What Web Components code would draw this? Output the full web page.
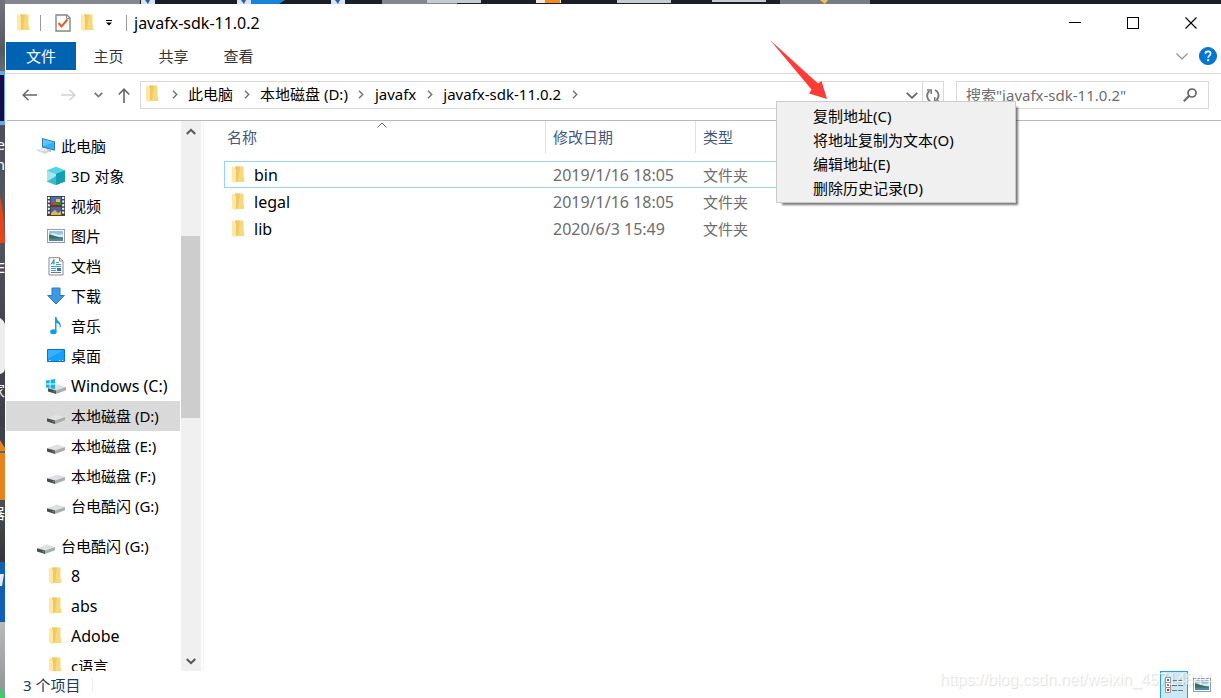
<!DOCTYPE html>
<html lang="zh-CN">
<head>
<meta charset="utf-8">
<title>javafx-sdk-11.0.2</title>
<style>
  html, body { margin: 0; height: 100%; overflow: hidden; }
  body {
    font: 15px/20px "Noto Sans", "Noto Sans CJK SC", sans-serif;
    color: #000;
    --latin: 16px;
  }
</style>
</head>
<body>
<desktop-shell>
  <explorer-window></explorer-window>
  <context-menu slot="overlay"></context-menu>
  <pointer-arrow slot="overlay"></pointer-arrow>
  <water-mark slot="overlay">https://blog.csdn.net/weixin_45714844</water-mark>
</desktop-shell>

<script>
const define = (name, html, setup) => {
  const t = document.createElement('template');
  t.innerHTML = html;
  customElements.define(name, class extends HTMLElement {
    connectedCallback() {
      if (this.shadowRoot) return;
      const root = this.attachShadow({ mode: 'open' });
      root.append(t.content.cloneNode(true));
      if (setup) setup(this, root);
    }
  });
};

const svg = (w, h, body) => `<svg width="${w}" height="${h}" viewBox="0 0 ${w} ${h}" aria-hidden="true">${body}</svg>`;
const line = (d, c, w = 1) => `<path d="${d}" fill="none" stroke="${c}" stroke-width="${w}"/>`;
const drive = `<path d="M0 11.2 10 7.6 18 10 8 14.2Z" fill="#dfe0e2"/><path d="M0 11.2 8 13.6V17L0 14.4Z" fill="#4a4d4f"/><path d="M8 13.6 18 10v3.2L8 17Z" fill="#aaadb0"/><path d="M5.5 13.8l1.7.5v1.3l-1.7-.5Z" fill="#28c840"/>`;
const photo = `<rect x=".5" y=".5" width="17" height="13" fill="#fff" stroke="#9b9b9b"/><path d="M2 2h14v10H2Z" fill="#8fc4f2"/><path d="M2 5.5Q6 3.5 9 5t7 0v3H2Z" fill="#d9ecfa"/><path d="M2 5.5C5 5 7 8 16 8.4V10H2Z" fill="#3c7053"/><path d="M2 9.5h14V12H2Z" fill="#4c86b4"/>`;
const ICONS = {
  folder: svg(14, 18, `<path d="M3 .5h8.500v10.500l.7 1v4H3Z" fill="#f7d87c"/><path d="M3 .5h5L6 15.500H3Z" fill="#eec968"/><path d="M0 .5h1.500l2.500 3V17.500L0 15.500Z" fill="#ffe8a3"/>`),
  check: svg(16, 18, `<path d="M1 1h11l3 3v13H1Z" fill="#fff" stroke="#858585" stroke-width="1.4"/><path d="M11.5 1v3.5H15" fill="none" stroke="#858585"/>${line('M3.5 9l3 3.5 6-7', '#ee5a24', 2)}`),
  more: svg(8, 6, `<path d="M1 .5h6" stroke="#000"/><path d="M1 2.5h6L4 5.5Z"/>`),
  min: svg(12, 12, line('M0 5.5h12', '#000')),
  max: svg(12, 12, '<rect x=".5" y=".5" width="11" height="11" fill="none" stroke="#000"/>'),
  close: svg(12, 12, line('M.5.5l11 11M11.5.5l-11 11', '#000', 1.1)),
  expand: svg(12, 7, line('M.5.5 6 6 11.5.5', '#8f8f8f', 1.2)),
  help: svg(18, 18, `<circle cx="9" cy="9" r="8.6" fill="#0078d7" stroke="#0b5fa5" stroke-width=".8"/><path d="M6.4 6.8Q6.5 4.4 9.1 4.4q2.5 0 2.5 2.2 0 1.2-1.2 2Q9.2 9.4 9.2 10.8" fill="none" stroke="#fff" stroke-width="1.7"/><path d="M8.2 12.2h2v2h-2Z" fill="#fff"/>`),
  back: svg(15, 12, line('M15 6H1.5M6.5.8 1.2 6l5.3 5.2', '#666', 1.5)),
  forward: svg(15, 12, line('M0 6h13.5M8.5.8 13.8 6 8.5 11.2', '#d2d2d2', 1.5)),
  recent: svg(9, 6, line('M.7.8l3.8 3.8L8.3.8', '#777', 1.7)),
  up: svg(12, 15, line('M6 15V1.5M.8 6.5 6 1.2l5.2 5.3', '#666', 1.6)),
  crumb: svg(6, 9, line('M1 .8 4.7 4.5 1 8.2', '#777', 1.5)),
  drop: svg(12, 7, line('M.8.8 6 5.8 11.2.8', '#666', 1.8)),
  refresh: svg(16, 15, `${line('M5.2 13A6 6 0 0 1 4.500 3M10 2A6 6 0 0 1 11.500 12', '#777', 1.8)}<path d="M2 1.200H7V6H5.500V2.800H2Z" fill="#777"/><path d="M14 13.800H9V9h1.500v3.200H14Z" fill="#777"/>`),
  search: svg(14, 14, `<circle cx="9" cy="5" r="4" fill="none" stroke="#666" stroke-width="1.7"/>${line('M6.2 7.8.8 13.2', '#666', 2)}`),
  sort: svg(10, 6, line('M.5 5.5 5 1l4.5 4.5', '#666')),
  scrollup: svg(10, 7, line('M.8 6 5 1.8 9.2 6', '#555', 2)),
  scrolldown: svg(10, 7, line('M.8 1 5 5.2 9.2 1', '#555', 2)),
  pc: svg(20, 18, `<path d="M6 1l13 3.4v9.4L6 10.6Z" fill="#2c7cb0"/><path d="M7 2.3l11 2.9v7.2L7 9.6Z" fill="#35b1fa"/><path d="M7 2.3l11 2.9L7 9Z" fill="#61c5ff"/><path d="M11 12l4 1v2l-4-1Z" fill="#b6bdc3"/><path d="M0 13.2l5.5-2L14 14l-5 3Z" fill="#cfd5da"/><path d="M2 13.2l4-1.2 5 2M4 14.2l4-1.4" fill="none" stroke="#eef1f3"/>`),
  cube: svg(18, 18, `<path d="M9 0l9 3.5v11L9 18 0 14.5v-11Z" fill="#18a9bc"/><path d="M9 0l9 3.5L9 7 0 3.5Z" fill="#53d6e4"/><path d="M0 3.5 9 7v11l-9-3.5Z" fill="#a4e7ef"/><path d="M0 14.5 9 9v9Z" fill="#35bdce"/><path d="M9 7l9-3.5v11L9 18Z" fill="#169db1"/>`),
  film: svg(18, 20, `<path d="M0 0h18v20H0Z" fill="#444"/><path d="M4 1h10v8H4Z" fill="#3b6fd0"/><path d="M4 11h10v8H4Z" fill="#3565c8"/><path d="M1.8 1v18M16.2 1v18" stroke="#fff" stroke-width="2" stroke-dasharray="2 1.6"/><path d="M9 3h4v3H9Z" fill="#e9c22f"/><path d="M4 6h4v3H4Zm5 5h4v2H9Z" fill="#d33a2c"/><path d="M8 6h6v3H8Z" fill="#3b8a35"/><path d="M4 17l4-3 3 3 3-2v4H4Z" fill="#e0bc35"/>`),
  photo: svg(18, 14, photo),
  doc: svg(16, 19, `<path d="M1 .7h10.5L15 4v14H1Z" fill="#fff" stroke="#8b8b8b"/><path d="M11.5.7V4H15" fill="none" stroke="#8b8b8b"/>${line('M8 5.500h3M8 7.500h5M3 9.500h10M3 11.500h5M3 13.500h5', '#3b9fdd')}${line('M3 15.500h10', '#777')}${line('M3 7.5l3-5v5M4.200 6h2', '#1986cc')}<path d="M9 11h4v3H9Z" fill="#357c94"/>`),
  download: svg(18, 18, `<path d="M5 1h8v7.5h4.3L9 17 .7 8.500H5Z" fill="#3c99e6" stroke="#2678bf"/>`),
  music: svg(14, 18, `<path d="M6 0h1.500c0 4 4.800 4.500 4.300 9.500l-1.300 2C11.500 8 9.800 6.500 7.500 6v8.500H6Z" fill="#129cef"/><ellipse cx="4.400" cy="14.700" rx="3.300" ry="2.500" fill="#129cef"/>`),
  desk: svg(18, 14, `<path d="M.5.5h17v12H.5Z" fill="#14a0fb" stroke="#0874b9"/><path d="M1 1h16L1 10Z" fill="#35b0ff"/><path d="M2 11.500h1.500M12 11.500h1M15 11.500h1" stroke="#fff"/>`),
  drive: svg(18, 18, drive),
  windrive: svg(20, 18, `<g transform="translate(2)">${drive}</g><path d="M0 3.500l3.600-.6V6.500H0ZM4.500 2.800 9 2v4.500H4.500ZM0 7.400h3.600V11L0 10.400ZM4.500 7.400H9V12l-4.500-.8Z" fill="#0cb6f2"/>`),
  details: svg(18, 18, `<g fill="#fff" stroke="#999"><path d="M.5 1.500h5v5h-5ZM.5 6.500h5v5h-5ZM.5 11.500h5v5h-5Z"/></g><path d="M2 3h2v2H2Z" fill="#2d7dca"/><path d="M2 8h2v2H2Z" fill="#b06e2a"/><path d="M2 13h2v2H2Z" fill="#d21c1c"/>${line('M7 4.500h5M13 4.500h5M7 9.500h5M13 9.500h5M7 14.500h5M13 14.500h5', '#777')}`)
};

define('ui-icon', `<style>:host{display:inline-flex;flex:none}svg{display:block}</style>`,
  (el, root) => root.append(document.createRange().createContextualFragment(ICONS[el.getAttribute('name')])));

/* Desktop wallpaper with the slivers of shortcuts that peek out beside the window */
define('desktop-shell', `<style>
  :host{display:block;position:relative;box-sizing:border-box;height:100vh;padding:4px 0 0 5px;overflow:hidden;
    background:linear-gradient(90deg,#0000 5px,#1b1e27 5px) 0 0/100% 4px no-repeat,
    linear-gradient(#73757c,#555962 50px,#666a72 70px,#4c505a 130px,#555862 225px,#45484f 310px,#3d4047 420px,#4c4f55 500px,#34363b 560px,#b9bbbd 620px,#8f9396)}
  .wall{position:absolute;inset:0;overflow:hidden}
  .wall svg{position:absolute;left:0;top:0}
  .wall span{position:absolute;left:-4px;width:9px;overflow:hidden;color:#fff;white-space:nowrap;direction:rtl}
  ::slotted(explorer-window){position:relative}
</style>
<div class="wall">
  <svg width="1221" height="698" aria-hidden="true">
    <path d="M0 71h5v54H0Z" fill="#6aa7e6"/><path d="M0 75h4v46H0Z" fill="#160c4b"/>
    <path d="M0 197q4 14 5 46H0Z" fill="#e5451a"/><path d="M0 318q5 3 5 8v42q0 5-5 6Z" fill="#eee"/>
    <path d="M0 440l5 8v52H0Z" fill="#e58320"/><path d="M0 452h5" stroke="#666" stroke-width="2"/>
    <path d="M0 562h5v60H0Z" fill="#1260b4"/><path d="M0 574l4 0-2 12H0Z" fill="#e4eaff"/>
    <path d="M0 688q5 3 5 10H0Z" fill="#43c66c"/>
    <path d="M5 0h135v4H5ZM382 0h75v4h-75Z" fill="#858790"/>
    <path d="M141 0h14v4h-14ZM237 0h14v4h-14ZM331 0h14v4h-14Z" fill="#d6e4f5"/>
    <path d="M145 0h5l-2 4ZM241 0h5l-2 4ZM335 0h5l-2 4Z" fill="#2860a8"/>
    <path d="M251 0h34l-6 4h-28Z" fill="#1485d8"/>
    <path d="M427 0h54v3h-54ZM617 0h54v3h-54ZM712 0h54v2h-54Z" fill="#c6ccd0"/>
    <path d="M536 0h25v3h-25Z" fill="#f3e8da"/><path d="M545 0h15v3h-15Z" fill="#f58a18"/>
    <path d="M780 0h90v4h-90Z" fill="#777b86"/><path d="M820 0h8l-3 4Z" fill="#f0c34a"/>
  </svg>
  <span style="top:134px">e</span><span style="top:154px">n</span><span style="top:257px">E</span>
  <span style="top:380px">家</span><span style="top:503px">器</span>
</div>
<slot></slot><slot name="overlay"></slot>`);

define('explorer-window', `<style>
  :host{display:flex;flex-direction:column;height:100%;background:#fff;overflow:hidden}
  main{flex:1;display:flex;min-height:0;margin-left:2px;border-top:1px solid #b9b9b9}
  nav-pane{margin-left:-1px} file-list{flex:1;min-width:0}
</style>
<title-bar>javafx-sdk-11.0.2</title-bar>
<ribbon-tabs></ribbon-tabs>
<address-row></address-row>
<main><nav-pane></nav-pane><scroll-track></scroll-track><file-list></file-list></main>
<status-bar></status-bar>`);

const BTN = `button{all:unset;box-sizing:border-box;display:flex;align-items:center;justify-content:center;flex:none}`;

define('title-bar', `<style>${BTN}
  :host{display:flex;align-items:center;height:38px;padding-left:12px;font-size:var(--latin)}
  i{width:1px;height:16px;background:#999} .a{margin:0 14px 0 9px}
  .b{margin:0 7px 0 13px} .f{margin:0 10px} .t{flex:1}
  .w button{width:58px;height:38px} .w{display:flex;padding-right:1px}
</style>
<ui-icon name="folder"></ui-icon><i class="a"></i>
<button aria-label="属性"><ui-icon name="check"></ui-icon></button>
<button class="f" aria-label="新建文件夹"><ui-icon name="folder"></ui-icon></button>
<button aria-label="自定义快速访问工具栏"><ui-icon name="more"></ui-icon></button><i class="b"></i>
<span class="t"><slot></slot></span>
<div class="w"><button aria-label="最小化"><ui-icon name="min"></ui-icon></button><button aria-label="最大化"><ui-icon name="max"></ui-icon></button><button aria-label="关闭"><ui-icon name="close"></ui-icon></button></div>`);

define('ribbon-tabs', `<style>${BTN}
  :host{display:flex;align-items:center;padding:0 4px 3px 1px;border-bottom:1px solid #dadada;color:#333}
  button{height:28px} .tab{width:65px} .file{width:70px;background:#0063b1;color:#fff}
  .gap{flex:1} .help{margin-left:11px}
</style>
<button class="tab file">文件</button><button class="tab">主页</button><button class="tab">共享</button><button class="tab">查看</button>
<span class="gap"></span>
<button aria-label="展开功能区"><ui-icon name="expand"></ui-icon></button><button class="help" aria-label="帮助"><ui-icon name="help"></ui-icon></button>`);

define('address-row', `<style>${BTN}
  :host{display:flex;padding:7px 12px 11px 17px}
  .nav{display:flex;align-items:center;width:118px} .nav button+button{margin-left:24px}
  .nav .r{margin-left:18px!important} .nav .u{margin-left:15px!important}
  .field{flex:1;min-width:0;display:flex;box-sizing:border-box;height:28px;border:1px solid #d9d9d9}
  ol{flex:1;display:flex;align-items:center;margin:0;padding:0 0 0 5px;list-style:none;white-space:nowrap}
  li{display:flex;align-items:center;height:24px} ol{align-items:flex-start} a{color:#000;text-decoration:none}
  .sep{width:27px;justify-content:center} .first{margin-left:1px}
  .drop{width:20px} .ref{width:21px;border-left:1px solid #d9d9d9}
  .search{box-sizing:border-box;display:flex;align-items:center;width:253px;height:28px;margin-left:12px;border:1px solid #d9d9d9;padding:0 11px 0 9px}
  input{all:unset;flex:1;min-width:0;height:26px} input::placeholder{color:#6d6d6d;opacity:1}
</style>
<div class="nav"><button aria-label="后退"><ui-icon name="back"></ui-icon></button><button aria-label="前进"><ui-icon name="forward"></ui-icon></button><button class="r" aria-label="最近浏览的位置"><ui-icon name="recent"></ui-icon></button><button class="u" aria-label="上移"><ui-icon name="up"></ui-icon></button></div>
<div class="field"><ol>
<li><ui-icon name="folder"></ui-icon></li><li class="sep first"><ui-icon name="crumb"></ui-icon></li>
<li><a href="#pc">此电脑</a></li><li class="sep"><ui-icon name="crumb"></ui-icon></li>
<li><a href="#d">本地磁盘 (D:)</a></li><li class="sep"><ui-icon name="crumb"></ui-icon></li>
<li><a href="#javafx">javafx</a></li><li class="sep"><ui-icon name="crumb"></ui-icon></li>
<li><a href="#sdk">javafx-sdk-11.0.2</a></li><li class="sep"><ui-icon name="crumb"></ui-icon></li>
</ol><button class="drop" aria-label="以前的位置"><ui-icon name="drop"></ui-icon></button><button class="ref" aria-label="刷新"><ui-icon name="refresh"></ui-icon></button></div>
<div class="search"><input type="text" aria-label="搜索" placeholder='搜索"javafx-sdk-11.0.2"'><ui-icon name="search"></ui-icon></div>`);

define('nav-item', `<style>
  :host{display:block} a{display:flex;align-items:center;height:30px;padding-left:40px;color:#000;text-decoration:none;white-space:nowrap}
  :host([root]) a{padding-left:30px} :host([selected]) a{background:#d9d9d9}
  :host([latin]) a{font-size:var(--latin)}
  .i{display:flex;justify-content:center;width:20px;margin-right:5px}
</style><a href="#"><span class="i"></span><slot></slot></a>`, (el, root) => {
  root.querySelector('.i').innerHTML = `<ui-icon name="${el.getAttribute('icon')}"></ui-icon>`;
});

define('nav-pane', `<style>
  :host{display:block;box-sizing:border-box;width:174px;padding-top:10px;overflow:hidden} section+section{margin-top:10px}
</style>
<section>
<nav-item root icon="pc">此电脑</nav-item>
<nav-item icon="cube">3D 对象</nav-item>
<nav-item icon="film">视频</nav-item>
<nav-item icon="photo">图片</nav-item>
<nav-item icon="doc">文档</nav-item>
<nav-item icon="download">下载</nav-item>
<nav-item icon="music">音乐</nav-item>
<nav-item icon="desk">桌面</nav-item>
<nav-item latin icon="windrive">Windows (C:)</nav-item>
<nav-item icon="drive" selected>本地磁盘 (D:)</nav-item>
<nav-item icon="drive">本地磁盘 (E:)</nav-item>
<nav-item icon="drive">本地磁盘 (F:)</nav-item>
<nav-item icon="drive">台电酷闪 (G:)</nav-item>
</section>
<section>
<nav-item root icon="drive">台电酷闪 (G:)</nav-item>
<nav-item latin icon="folder">8</nav-item>
<nav-item latin icon="folder">abs</nav-item>
<nav-item latin icon="folder">Adobe</nav-item>
<nav-item icon="folder">c语言</nav-item>
</section>`);

define('scroll-track', `<style>${BTN}
  :host{display:flex;flex-direction:column;width:20px;margin:0 2px 0 1px;background:#f0f0f0}
  button{height:20px} .pre{flex:95} .thumb{flex:182;margin-right:1px;background:#cdcdcd} .post{flex:233}
</style>
<button aria-label="向上滚动"><ui-icon name="scrollup"></ui-icon></button><div class="pre"></div><div class="thumb"></div><div class="post"></div><button aria-label="向下滚动"><ui-icon name="scrolldown"></ui-icon></button>`);

define('file-list', `<style>
  :host{display:block;border-left:1px solid #f3f3f3;padding-left:20px}
  table{width:690px;table-layout:fixed;border-collapse:separate;border-spacing:0}
  .n{width:322px} .d{width:150px}
  th{position:relative;padding:0 0 8px;font-weight:400;text-align:left;color:#44587a}
  th div{height:32px;line-height:32px;padding-left:7px;border-right:1px solid #e0e0e0} th.n div{padding-left:3px} th:last-child div{border:0}
  th ui-icon{position:absolute;left:153px;top:1px}
  td{height:27px;padding:0 0 0 7px;color:#6d6d6d;white-space:nowrap}
  td:first-child{padding-left:8px;color:#000;font-size:var(--latin)} td:nth-child(2){font-size:var(--latin)}
  td span{display:flex;align-items:center;gap:8px}
  tr.focus{outline:1px solid #99d1ff;outline-offset:-1px}
</style>
<table><thead><tr><th class="n" aria-sort="ascending"><ui-icon name="sort"></ui-icon><div>名称</div></th><th class="d"><div>修改日期</div></th><th><div>类型</div></th></tr></thead>
<tbody>
<tr class="focus"><td><span><ui-icon name="folder"></ui-icon>bin</span></td><td>2019/1/16 18:05</td><td>文件夹</td></tr>
<tr><td><span><ui-icon name="folder"></ui-icon>legal</span></td><td>2019/1/16 18:05</td><td>文件夹</td></tr>
<tr><td><span><ui-icon name="folder"></ui-icon>lib</span></td><td>2020/6/3 15:49</td><td>文件夹</td></tr>
</tbody></table>`);

define('status-bar', `<style>${BTN}
  :host{display:flex;align-items:center;height:27px;padding:0 10px 0 18px;color:#1e395b}
  i{width:1px;height:14px;margin-left:12px;background:#eee} .gap{flex:1}
  .on{width:28px;height:27px;border:1px solid #26a0da;border-bottom:0;background:#cbe8f6;margin-right:5px}
</style>
<span>3 个项目</span><i></i><span class="gap"></span>
<button class="on" aria-label="详细信息"><ui-icon name="details"></ui-icon></button><button aria-label="大图标"><ui-icon name="photo"></ui-icon></button>`);

define('context-menu', `<style>
  :host{position:absolute;right:205px;top:101px;box-sizing:border-box;width:240px;padding:2px;border:1px solid #ccc;background:#f0f0f0;box-shadow:4px 4px 2px -2px #0008}
  button{all:unset;display:block;box-sizing:border-box;width:100%;height:24px;padding-left:34px;line-height:24px}
</style>
<div role="menu"><button role="menuitem">复制地址(C)</button><button role="menuitem">将地址复制为文本(O)</button><button role="menuitem">编辑地址(E)</button><button role="menuitem">删除历史记录(D)</button></div>`);

define('pointer-arrow', `<style>:host{position:absolute;right:393px;top:40px}svg{display:block}</style>` +
  svg(58, 60, '<path d="M0 0 48 43.500 51.500 41 57 59 39 53.500 41.500 49.500Z" fill="#ff3b36"/>'));

define('water-mark', `<style>:host{position:absolute;right:9px;bottom:8px;font:16px/20px "Liberation Sans",sans-serif;color:#fffb;text-shadow:1px 1px 1px #0002;pointer-events:none}</style><slot></slot>`);
</script>
</body>
</html>
